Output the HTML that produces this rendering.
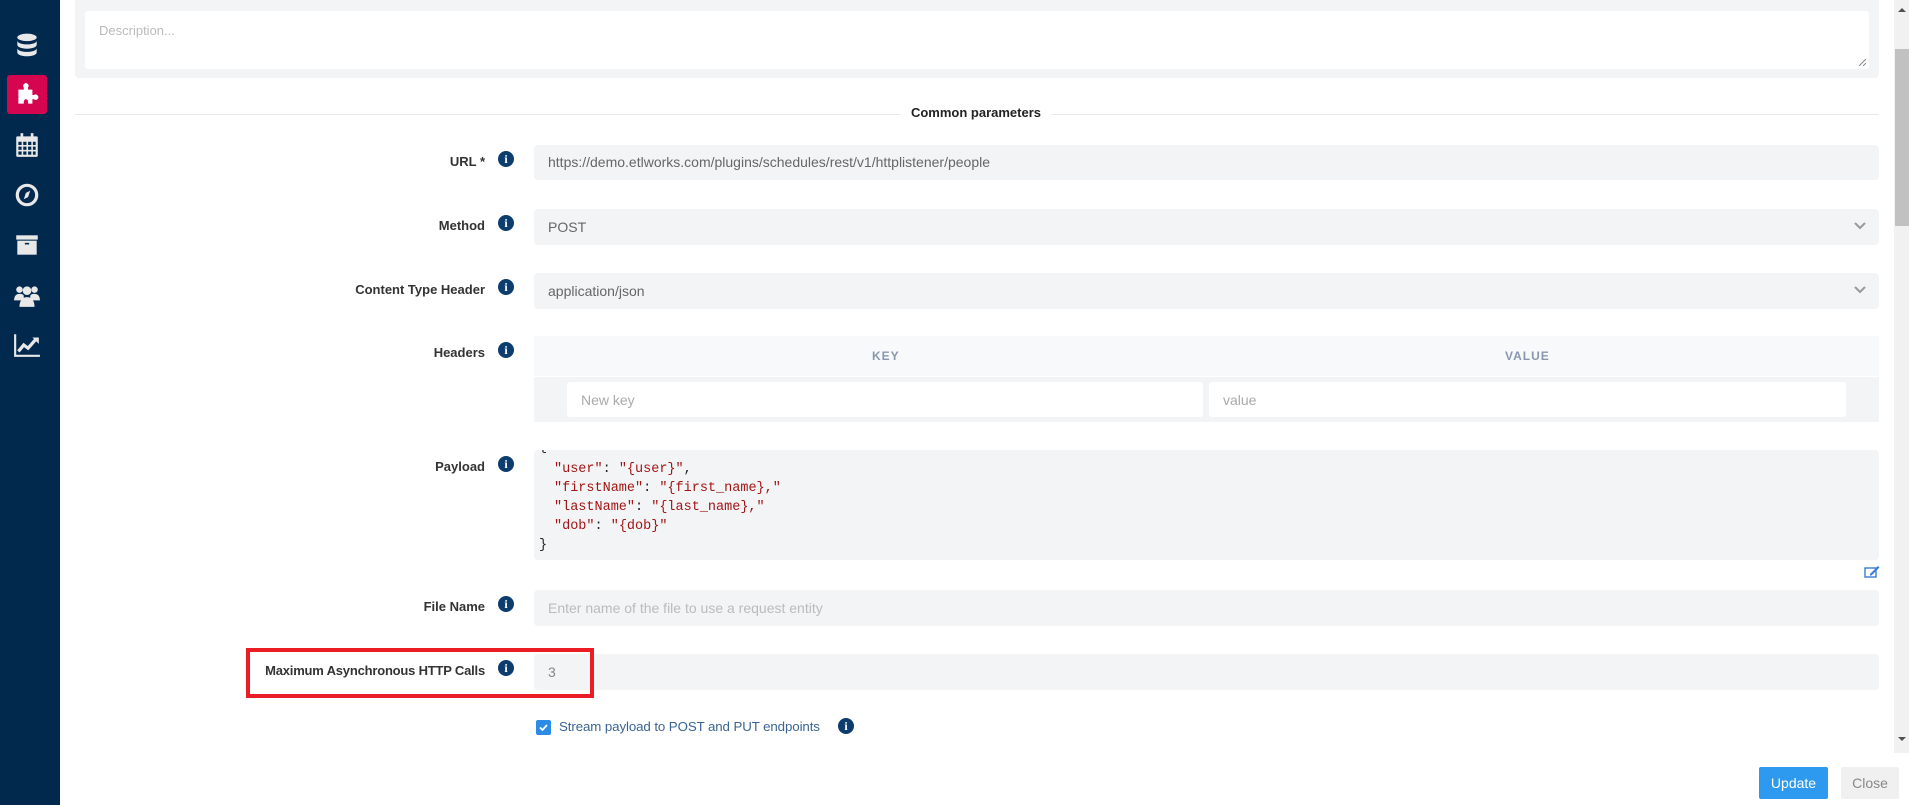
<!DOCTYPE html>
<html><head><style>
*{box-sizing:border-box;margin:0;padding:0}
body{width:1909px;height:805px;overflow:hidden;background:#fff;font-family:"Liberation Sans",sans-serif;position:relative}
.sb{position:absolute;left:0;top:0;width:60px;height:805px;background:#01284d}
.act{position:absolute;left:7px;top:75px;width:40px;height:39px;background:#d5064f;border-radius:3px}
.ic{position:absolute;left:13px;width:28px;height:28px}
.abs{position:absolute}
.panel{position:absolute;left:75px;top:0;width:1804px;height:78px;background:#f3f4f6;border-radius:0 0 4px 4px}
.ta{position:absolute;left:85px;top:11px;width:1784px;height:58px;background:#fff;border-radius:3px;color:#bbb;font-size:13px;padding:12px 14px}
.line{position:absolute;left:75px;top:114px;width:1804px;height:1px;background:#e6e8ea}
.cp{position:absolute;left:900px;top:105px;width:152px;text-align:center;background:#fff;font-weight:bold;font-size:13px;color:#222}
.lbl{position:absolute;right:1424px;font-size:13px;font-weight:bold;color:#333;text-align:right;white-space:nowrap}
.info{position:absolute;width:16px;height:16px;border-radius:50%;background:#0d3c6e;color:#fff;font-size:12px;font-weight:bold;text-align:center;line-height:16px;font-family:"Liberation Serif",serif}
.inp{position:absolute;left:534px;width:1345px;height:36px;background:#f3f4f6;border-radius:4px;font-size:14px;color:#666;padding:0 14px;line-height:36px}
.chev{position:absolute;right:12px;top:12px}
.code{font-family:"Liberation Mono",monospace;font-size:13.5px;line-height:19px;color:#a31515}
</style></head><body>
<div class="sb">
<div class="act"></div>
<svg class="ic" style="top:32px" viewBox="0 0 26 26"><g fill="#e8e8e8"><ellipse cx="13" cy="5" rx="9" ry="3.5"/><path d="M4 8c0 2 4 3.5 9 3.5s9-1.5 9-3.5v4c0 2-4 3.5-9 3.5S4 14 4 12z"/><path d="M4 15c0 2 4 3.5 9 3.5s9-1.5 9-3.5v4c0 2-4 3.5-9 3.5S4 21 4 19z"/></g></svg>
<svg class="ic" style="top:81px" viewBox="0 0 26 26"><path fill="#fff" d="M5 8h5V6a2.5 2.5 0 1 1 4 0v2h4v5h1.5a2.5 2.5 0 1 1 0 4H18v4h-4v-2a2 2 0 1 0-4 0v2H5z"/></svg>
<svg class="ic" style="top:131px" viewBox="0 0 26 26"><g fill="#e8e8e8"><rect x="3" y="5" width="20" height="19" rx="1"/></g><g fill="#01284d"><rect x="5" y="10" width="3" height="3"/><rect x="9.5" y="10" width="3" height="3"/><rect x="14" y="10" width="3" height="3"/><rect x="18.5" y="10" width="2.5" height="3"/><rect x="5" y="14.5" width="3" height="3"/><rect x="9.5" y="14.5" width="3" height="3"/><rect x="14" y="14.5" width="3" height="3"/><rect x="18.5" y="14.5" width="2.5" height="3"/><rect x="5" y="19" width="3" height="3"/><rect x="9.5" y="19" width="3" height="3"/><rect x="14" y="19" width="3" height="3"/><rect x="18.5" y="19" width="2.5" height="3"/></g><rect x="7" y="2" width="2.5" height="5" fill="#e8e8e8"/><rect x="16.5" y="2" width="2.5" height="5" fill="#e8e8e8"/></svg>
<svg class="ic" style="top:181px" viewBox="0 0 26 26"><circle cx="13" cy="13" r="9" fill="none" stroke="#e8e8e8" stroke-width="3"/><path d="M16 9l-2 6-4 2 2-6z" fill="#e8e8e8"/></svg>
<svg class="ic" style="top:231px" viewBox="0 0 26 26"><rect x="3" y="4" width="20" height="4" fill="#e8e8e8"/><rect x="4" y="9" width="18" height="13" fill="#e8e8e8"/><rect x="11" y="11" width="4" height="1.5" fill="#01284d"/></svg>
<svg class="ic" style="top:281px" viewBox="0 0 26 26"><g fill="#e8e8e8"><circle cx="6" cy="8" r="3"/><circle cx="20" cy="8" r="3"/><circle cx="13" cy="9" r="4"/><path d="M1 18c0-4 2-6 5-6s4 1 4 2v4z"/><path d="M25 18c0-4-2-6-5-6s-4 1-4 2v4z"/><path d="M6 24c0-6 3-9 7-9s7 3 7 9z"/></g></svg>
<svg class="ic" style="top:331px" viewBox="0 0 26 26"><path d="M2 3v20h23" fill="none" stroke="#e8e8e8" stroke-width="2"/><path d="M5 19l5-6 4 3 7-8" fill="none" stroke="#e8e8e8" stroke-width="3"/><path d="M18 6h6v6z" fill="#e8e8e8"/></svg>
</div>

<div class="panel"></div>
<div class="ta">Description...<svg class="abs" style="right:3px;bottom:3px" width="8" height="8"><path d="M8 1L1 8M8 5L5 8" stroke="#888"/></svg></div>
<div class="line"></div>
<div class="cp">Common parameters</div>

<div class="lbl" style="top:154px">URL *</div><div class="info" style="left:498px;top:151px">i</div>
<div class="inp" style="top:145px;height:35px;line-height:35px">https://demo.etlworks.com/plugins/schedules/rest/v1/httplistener/people</div>

<div class="lbl" style="top:218px">Method</div><div class="info" style="left:498px;top:215px">i</div>
<div class="inp" style="top:209px">POST<svg class="chev" width="14" height="10"><path d="M2 2l5 5 5-5" fill="none" stroke="#999" stroke-width="2"/></svg></div>

<div class="lbl" style="top:282px">Content Type Header</div><div class="info" style="left:498px;top:279px">i</div>
<div class="inp" style="top:273px">application/json<svg class="chev" width="14" height="10"><path d="M2 2l5 5 5-5" fill="none" stroke="#999" stroke-width="2"/></svg></div>

<div class="lbl" style="top:345px">Headers</div><div class="info" style="left:498px;top:342px">i</div>
<div class="abs" style="left:534px;top:336px;width:1345px;height:40px;background:#f7f9fb;font-size:12px;font-weight:bold;color:#8b97ae;letter-spacing:1px">
<span class="abs" style="left:338px;top:13px">KEY</span><span class="abs" style="left:971px;top:13px">VALUE</span></div>
<div class="abs" style="left:534px;top:377px;width:1345px;height:45px;background:#f3f4f6"></div>
<div class="abs" style="left:567px;top:382px;width:636px;height:35px;background:#fff;border-radius:3px;font-size:14px;color:#aaa;padding:10px 14px">New key</div>
<div class="abs" style="left:1209px;top:382px;width:637px;height:35px;background:#fff;border-radius:3px;font-size:14px;color:#aaa;padding:10px 14px">value</div>

<div class="lbl" style="top:459px">Payload</div><div class="info" style="left:498px;top:456px">i</div>
<div class="abs" style="left:534px;top:450px;width:1345px;height:110px;background:#f3f4f6;border-radius:4px;overflow:hidden">
<div class="code abs" style="left:5px;top:-12px;color:#222;">{</div>
<div class="code abs" style="left:20px;top:10px">"user"<span style="color:#222">: </span>"{user}"<span style="color:#222">,</span></div>
<div class="code abs" style="left:20px;top:29px">"firstName"<span style="color:#222">: </span>"{first_name},"</div>
<div class="code abs" style="left:20px;top:48px">"lastName"<span style="color:#222">: </span>"{last_name},"</div>
<div class="code abs" style="left:20px;top:67px">"dob"<span style="color:#222">: </span>"{dob}"</div>
<div class="code abs" style="left:5px;top:86px;color:#222">}</div>
</div>
<svg class="abs" style="left:1864px;top:565px" width="16" height="13"><rect x="1" y="3" width="11" height="9" fill="none" stroke="#3a7bd5" stroke-width="1.4"/><path d="M6 9l8-8 1.5 1.5-8 8H6z" fill="#3a7bd5"/></svg>

<div class="lbl" style="top:599px">File Name</div><div class="info" style="left:498px;top:596px">i</div>
<div class="inp" style="top:590px;color:#bbb">Enter name of the file to use a request entity</div>

<div class="lbl" style="top:663px;letter-spacing:-0.2px">Maximum Asynchronous HTTP Calls</div><div class="info" style="left:498px;top:660px">i</div>
<div class="inp" style="top:654px;color:#888">3</div>
<div class="abs" style="left:246px;top:648px;width:348px;height:50px;border:4px solid #ea1d25"></div>

<div class="abs" style="left:536px;top:720px;width:15px;height:15px;background:#2b8be6;border-radius:2px"><svg width="15" height="15"><path d="M4 7.5l2.5 2.5 4.5-5" fill="none" stroke="#fff" stroke-width="1.8"/></svg></div>
<div class="abs" style="left:559px;top:719px;font-size:13.3px;color:#3a6494;letter-spacing:-0.1px">Stream payload to POST and PUT endpoints</div>
<div class="info" style="left:838px;top:718px">i</div>

<div class="abs" style="left:1894px;top:0;width:15px;height:753px;background:#f1f1f1"></div>
<div class="abs" style="left:1895px;top:49px;width:14px;height:177px;background:#c1c1c1"></div>
<svg class="abs" style="left:1896px;top:6px" width="12" height="8"><path d="M2 6h8L6 2z" fill="#505050"/></svg>
<svg class="abs" style="left:1896px;top:735px" width="12" height="8"><path d="M2 2h8L6 6z" fill="#505050"/></svg>

<div class="abs" style="left:1759px;top:767px;width:69px;height:32px;background:#2d9af0;border-radius:2px;color:#fff;font-size:14px;text-align:center;line-height:32px">Update</div>
<div class="abs" style="left:1841px;top:767px;width:58px;height:32px;background:#f0f0f0;border-radius:2px;color:#888;font-size:14px;text-align:center;line-height:32px">Close</div>
</body></html>
